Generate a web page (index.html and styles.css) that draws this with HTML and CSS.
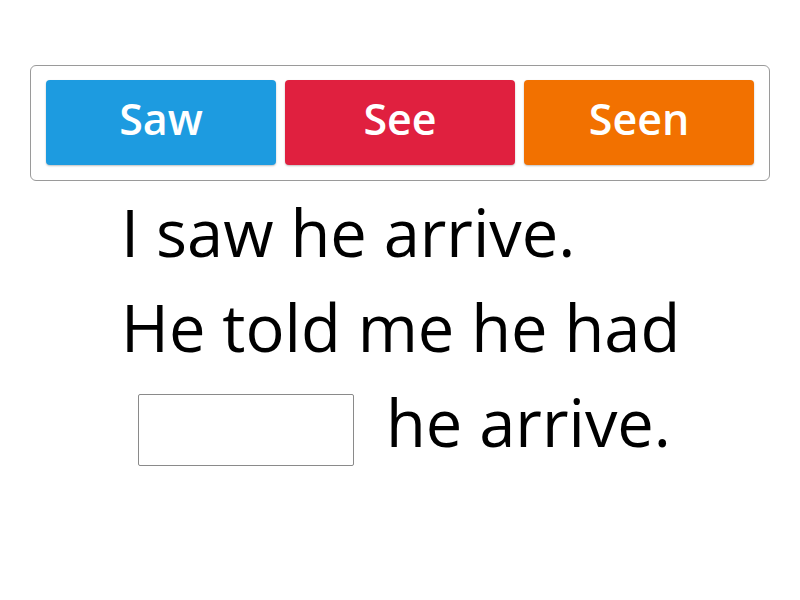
FILE: index.html
```html
<!DOCTYPE html>
<html>
<head>
<meta charset="utf-8">
<link rel="stylesheet" href="styles.css">
</head>
<body>
<div class="page">
  <div class="options">
    <div class="opt blue">Saw</div>
    <div class="opt red">See</div>
    <div class="opt orange">Seen</div>
  </div>
  <div class="text">
    <div class="line">I saw he arrive.</div>
    <div class="line">He told me he had</div>
    <div class="line third"><span class="blank"></span><span>he arrive.</span></div>
  </div>
</div>
</body>
</html>
```
FILE: styles.css
```css
html, body {
  margin: 0;
  padding: 0;
  background: #fff;
  font-family: "Open Sans", "DejaVu Sans", sans-serif;
}
.page {
  width: 800px;
  height: 600px;
  padding-top: 65px;
  box-sizing: border-box;
}
.options {
  margin-left: 30px;
  width: 740px;
  height: 116px;
  box-sizing: border-box;
  border: 1px solid #9a9a9a;
  border-radius: 6px;
  padding: 14px 15px 15px 15px;
  display: flex;
  gap: 9px;
}
.opt {
  flex: 1;
  border-radius: 4px;
  color: #fff;
  font-weight: 600;
  font-size: 43px;
  padding-bottom: 9px;
  box-sizing: border-box;
  display: flex;
  align-items: center;
  justify-content: center;
  box-shadow: 0 1px 2px rgba(0,0,0,0.25);
}
.blue { background: #1d9be0; }
.red { background: #e0203f; }
.orange { background: #f27100; }
.text {
  padding-left: 121px;
  padding-top: 4px;
  font-size: 65px;
  line-height: 95px;
  color: #000;
}
.line { white-space: nowrap; }
.third {
  display: flex;
  align-items: flex-start;
  padding-left: 17px;
  gap: 32px;
}
.blank {
  display: inline-block;
  width: 216px;
  height: 72px;
  margin-top: 19px;
  box-sizing: border-box;
  border: 1px solid #8a8a8a;
  border-radius: 2px;
  background: #fff;
}
```
